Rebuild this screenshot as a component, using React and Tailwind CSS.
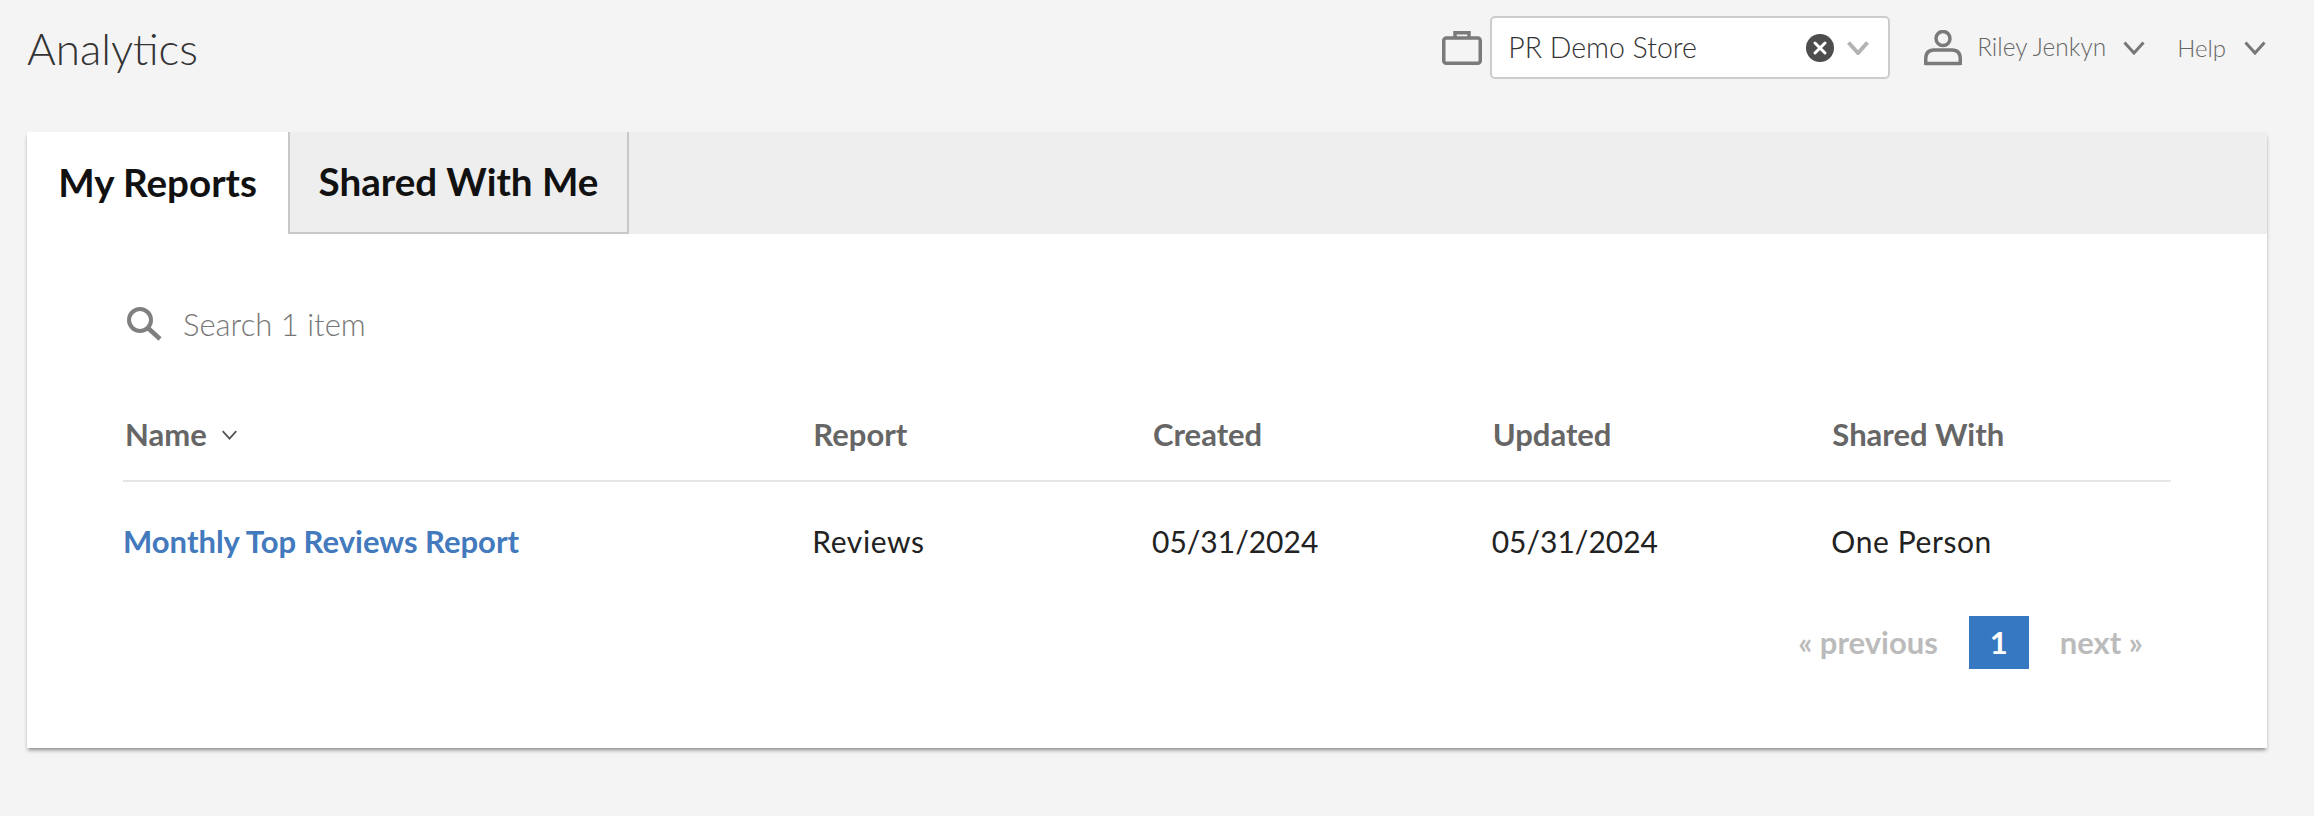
import React from 'react';

const FONT = "font-['Lato','Liberation_Sans',sans-serif]";

function Chevron({ className = '', stroke = 2.5 }) {
  return (
    <svg viewBox="0 0 22 14" className={className} fill="none" stroke="currentColor" strokeWidth={stroke}>
      <path d="M1.5 1.5 L11 12 L20.5 1.5" />
    </svg>
  );
}

function Briefcase() {
  return (
    <svg width="40" height="34" viewBox="0 0 40 34" fill="none" stroke="#7a7a7a" strokeWidth="3.5">
      <rect x="1.75" y="7" width="36.5" height="25.25" rx="2.5" />
      <path d="M13 6 V1.75 H27 V6" />
    </svg>
  );
}

function Person() {
  return (
    <svg width="38" height="36" viewBox="0 0 38 36" fill="none" stroke="#7a7a7a" strokeWidth="3.5">
      <circle cx="19" cy="8.5" r="7" />
      <path d="M1.75 35 V29 Q1.75 20 10 20 H28 Q36.25 20 36.25 29 V35" />
      <path d="M1.5 33.5 H36.5" />
    </svg>
  );
}

function ClearIcon() {
  return (
    <svg width="28" height="28" viewBox="0 0 28 28">
      <circle cx="14" cy="14" r="14" fill="#4d4d4d" />
      <path d="M9 9 L19 19 M19 9 L9 19" stroke="#fff" strokeWidth="3" strokeLinecap="round" />
    </svg>
  );
}

function SearchIcon() {
  return (
    <svg width="36" height="36" viewBox="0 0 36 36" fill="none" stroke="#7f7f7f">
      <circle cx="14" cy="14" r="11" strokeWidth="4" />
      <path d="M22 22 L34 33" strokeWidth="4.5" />
    </svg>
  );
}

function Header() {
  return (
    <header className="flex h-[132px] items-start justify-between pl-[27px] pr-[48px]">
      <h1 className="mt-[23px] text-[44px] font-light leading-[50px] text-[#333]">Analytics</h1>
      <div className="mt-[16px] flex items-center">
        <Briefcase />
        <div className="ml-[8px] flex h-[63px] w-[400px] items-center rounded-[5px] border-2 border-[#ccc] bg-white pl-[16px] pr-[17px]">
          <span className="flex-1 text-[28.5px] font-light text-[#333]">PR Demo Store</span>
          <ClearIcon />
          <Chevron className="ml-[11px] h-[14px] w-[26px] text-[#b3b3b3]" stroke={4} />
        </div>
        <div className="ml-[34px]"><Person /></div>
        <span className="ml-[15px] text-[24.5px] font-light text-[#666]">Riley Jenkyn</span>
        <Chevron className="ml-[17px] h-[14px] w-[22px] text-[#777]" stroke={3} />
        <span className="ml-[32px] text-[24px] font-light text-[#666]">Help</span>
        <Chevron className="ml-[18px] h-[14px] w-[22px] text-[#777]" stroke={3} />
      </div>
    </header>
  );
}

function Tabs() {
  return (
    <div className="flex h-[102px] bg-[#eeeeee]">
      <div className="flex w-[261px] items-center justify-center bg-white pb-[1px] text-[38.6px] font-bold text-[#111]">My Reports</div>
      <div className="flex w-[341px] items-center justify-center border-x-2 border-b-2 border-[#c8c8c8] text-[38.6px] font-bold text-[#111]">Shared With Me</div>
    </div>
  );
}

function Table() {
  const headers = ['Report', 'Created', 'Updated', 'Shared With'];
  const values = ['Reviews', '05/31/2024', '05/31/2024', 'One Person'];
  return (
    <div className="mt-[69px]">
      <div className="flex h-[67px] items-center border-b-2 border-[#e6e6e6] pb-[26px] text-[31px] font-bold leading-none text-[#666]">
        <div className="flex w-[690px] items-center pl-[2px]">
          Name
          <Chevron className="ml-[14px] h-[10px] w-[17px] text-[#555]" stroke={2.5} />
        </div>
        {headers.map((h) => (
          <div key={h} className="w-[340px] pl-[1px]">{h}</div>
        ))}
      </div>
      <div className="flex h-[118px] items-center text-[30px] leading-none">
        <a className="w-[690px] text-[31px] font-bold text-[#4379bd]">Monthly Top Reviews Report</a>
        {values.map((v, i) => (
          <div key={i} className={`w-[340px] text-[#222] ${v.includes('/') ? '' : 'tracking-[0.6px]'}`}>{v}</div>
        ))}
      </div>
    </div>
  );
}

function Pagination() {
  return (
    <div className="mt-[16px] flex items-center justify-end pr-[28px] text-[31px] font-bold text-[#bbb]">
      <span>« previous</span>
      <span className="mx-[31px] flex h-[53px] w-[60px] items-center justify-center bg-[#3679c0] text-white">1</span>
      <span>next »</span>
    </div>
  );
}

export default function App() {
  return (
    <div className={`${FONT} min-h-[816px] bg-[#f4f4f4]`}>
      <Header />
      <main className="ml-[27px] w-[2240px] bg-white shadow-[0_3px_4px_-1px_rgba(0,0,0,0.45)]">
        <Tabs />
        <div className="h-[514px] pl-[96px] pr-[96px] pt-[69px]">
          <div className="flex h-[42px] items-center gap-[21px] pl-[3px]">
            <SearchIcon />
            <span className="text-[31px] font-light text-[#777]">Search 1 item</span>
          </div>
          <div className="h-[1px]" />
          <Table />
          <Pagination />
        </div>
      </main>
    </div>
  );
}
